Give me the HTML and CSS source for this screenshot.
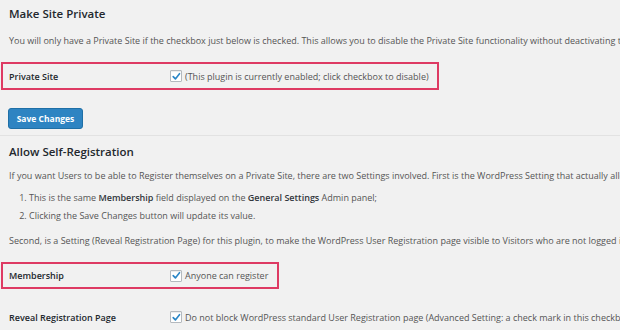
FILE: index.html
```html
<!DOCTYPE html>
<html>
<head>
<meta charset="utf-8">
<link rel="stylesheet" href="styles.css">
</head>
<body>
<div class="page">
  <h2 class="title t1">Make Site Private</h2>
  <p class="desc d1">You will only have a Private Site if the checkbox just below is checked. This allows you to disable the Private Site functionality without deactivating the plugin.</p>
  <div class="row boxed b1">
    <div class="label">Private Site</div>
    <div class="field"><span class="check"><svg viewBox="0 0 11 11" width="11" height="11"><path d="M2.3 5.6 L4.6 8 L8.9 2.6" fill="none" stroke="#2a86c6" stroke-width="1.7" stroke-linecap="round" stroke-linejoin="round"/></svg></span><span>(This plugin is currently enabled; click checkbox to disable)</span></div>
  </div>
  <div class="actions"><button class="btn">Save Changes</button></div>
  <div class="divider"></div>
  <h2 class="title t2">Allow Self-Registration</h2>
  <p class="desc d2">If you want Users to be able to Register themselves on a Private Site, there are two Settings involved. First is the WordPress Setting that actually allows Users to register.</p>
  <ol class="steps">
    <li>This is the same <b>Membership</b> field displayed on the <b>General Settings</b> Admin panel;</li>
    <li>Clicking the Save Changes button will update its value.</li>
  </ol>
  <p class="desc d3">Second, is a Setting (Reveal Registration Page) for this plugin, to make the WordPress User Registration page visible to Visitors who are not logged in.</p>
  <div class="row boxed b2">
    <div class="label">Membership</div>
    <div class="field"><span class="check"><svg viewBox="0 0 11 11" width="11" height="11"><path d="M2.3 5.6 L4.6 8 L8.9 2.6" fill="none" stroke="#2a86c6" stroke-width="1.7" stroke-linecap="round" stroke-linejoin="round"/></svg></span><span>Anyone can register</span></div>
  </div>
  <div class="row plain">
    <div class="label">Reveal Registration Page</div>
    <div class="field"><span class="check"><svg viewBox="0 0 11 11" width="11" height="11"><path d="M2.3 5.6 L4.6 8 L8.9 2.6" fill="none" stroke="#2a86c6" stroke-width="1.7" stroke-linecap="round" stroke-linejoin="round"/></svg></span><span>Do not block WordPress standard User Registration page (Advanced Setting: a check mark in this checkbox is required)</span></div>
  </div>
</div>
</body>
</html>
```

FILE: styles.css
```css
html, body {
  margin: 0;
  padding: 0;
  background: #f1f1f1;
  overflow: hidden;
}
.page {
  width: 620px;
  height: 330px;
  overflow: hidden;
  font-family: "Open Sans", "Noto Sans", sans-serif;
  font-size: 9px;
  color: #555;
}
.title {
  margin: 0;
  padding-left: 9px;
  font-size: 11.5px;
  line-height: 14px;
  font-weight: 600;
  color: #23282d;
  white-space: nowrap;
}
.t1 { margin-top: 7px; }
.t2 { margin-top: 9px; }
.desc {
  margin: 0;
  padding-left: 9px;
  line-height: 14px;
  white-space: nowrap;
}
.d1 { margin-top: 13px; }
.d2 { margin-top: 10px; }
.d3 { margin-top: 9px; }
.steps {
  margin: 6px 0 0 0;
  padding-left: 29px;
  line-height: 18px;
  white-space: nowrap;
}
.steps b { font-weight: 600; color: #32373c; }
.row {
  display: flex;
  align-items: center;
  white-space: nowrap;
}
.boxed {
  margin-left: 1px;
  border: 2px solid #de3a63;
  padding-left: 6px;
}
.b1 { margin-top: 14px; width: 428px; height: 24px; }
.b2 { margin-top: 14px; width: 268px; height: 23px; }
.plain { margin-top: 16px; height: 24px; padding-left: 9px; }
.label {
  width: 161px;
  flex: none;
  font-weight: 600;
  color: #23282d;
}
.field {
  display: flex;
  align-items: center;
  gap: 3px;
}
.check {
  display: inline-flex;
  width: 10px;
  height: 10px;
  border: 1px solid #b4b9be;
  background: #fff;
  border-radius: 1px;
  box-shadow: inset 0 1px 1px rgba(0,0,0,0.08);
  flex: none;
}
.check svg { margin: -0.5px 0 0 -0.5px; }
.actions { margin-top: 18px; padding-left: 8px; }
.btn {
  display: block;
  height: 21px;
  width: 75px;
  padding: 0;
  border: 1px solid #1f6fa6;
  border-radius: 3px;
  background: #2e84c2;
  color: #fff;
  font-family: "Open Sans", "Noto Sans", sans-serif;
  font-size: 8.5px;
  font-weight: 700;
  line-height: 19px;
}
.divider {
  margin-top: 6px;
  height: 1px;
  background: #e2e2e2;
}
```
